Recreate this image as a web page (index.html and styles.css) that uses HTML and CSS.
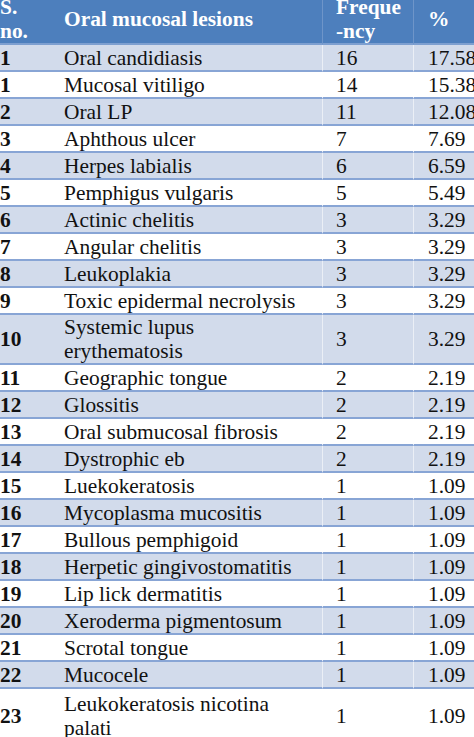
FILE: index.html
```html
<!DOCTYPE html>
<html lang="en">
<head>
<meta charset="utf-8">
<title>Oral mucosal lesions</title>
<link rel="stylesheet" href="styles.css">
</head>
<body>
<div class="frame">
<table class="lesions">
  <colgroup>
    <col class="c-no">
    <col class="c-name">
    <col class="c-freq">
    <col class="c-pct">
  </colgroup>
  <thead>
    <tr class="head">
      <th class="no">S.<br>no.</th>
      <th class="name">Oral mucosal lesions</th>
      <th class="freq">Freque<br>-ncy</th>
      <th class="pct">%</th>
    </tr>
  </thead>
  <tbody>
    <tr class="band"><td class="no">1</td><td class="name">Oral candidiasis</td><td class="freq">16</td><td class="pct">17.58</td></tr>
    <tr><td class="no">1</td><td class="name">Mucosal vitiligo</td><td class="freq">14</td><td class="pct">15.38</td></tr>
    <tr class="band"><td class="no">2</td><td class="name">Oral LP</td><td class="freq">11</td><td class="pct">12.08</td></tr>
    <tr><td class="no">3</td><td class="name">Aphthous ulcer</td><td class="freq">7</td><td class="pct">7.69</td></tr>
    <tr class="band"><td class="no">4</td><td class="name">Herpes labialis</td><td class="freq">6</td><td class="pct">6.59</td></tr>
    <tr><td class="no">5</td><td class="name">Pemphigus vulgaris</td><td class="freq">5</td><td class="pct">5.49</td></tr>
    <tr class="band"><td class="no">6</td><td class="name">Actinic chelitis</td><td class="freq">3</td><td class="pct">3.29</td></tr>
    <tr><td class="no">7</td><td class="name">Angular chelitis</td><td class="freq">3</td><td class="pct">3.29</td></tr>
    <tr class="band"><td class="no">8</td><td class="name">Leukoplakia</td><td class="freq">3</td><td class="pct">3.29</td></tr>
    <tr><td class="no">9</td><td class="name">Toxic epidermal necrolysis</td><td class="freq">3</td><td class="pct">3.29</td></tr>
    <tr class="band tall"><td class="no">10</td><td class="name">Systemic lupus<br>erythematosis</td><td class="freq">3</td><td class="pct">3.29</td></tr>
    <tr><td class="no">11</td><td class="name">Geographic tongue</td><td class="freq">2</td><td class="pct">2.19</td></tr>
    <tr class="band"><td class="no">12</td><td class="name">Glossitis</td><td class="freq">2</td><td class="pct">2.19</td></tr>
    <tr><td class="no">13</td><td class="name">Oral submucosal fibrosis</td><td class="freq">2</td><td class="pct">2.19</td></tr>
    <tr class="band"><td class="no">14</td><td class="name">Dystrophic eb</td><td class="freq">2</td><td class="pct">2.19</td></tr>
    <tr><td class="no">15</td><td class="name">Luekokeratosis</td><td class="freq">1</td><td class="pct">1.09</td></tr>
    <tr class="band"><td class="no">16</td><td class="name">Mycoplasma mucositis</td><td class="freq">1</td><td class="pct">1.09</td></tr>
    <tr><td class="no">17</td><td class="name">Bullous pemphigoid</td><td class="freq">1</td><td class="pct">1.09</td></tr>
    <tr class="band"><td class="no">18</td><td class="name">Herpetic gingivostomatitis</td><td class="freq">1</td><td class="pct">1.09</td></tr>
    <tr><td class="no">19</td><td class="name">Lip lick dermatitis</td><td class="freq">1</td><td class="pct">1.09</td></tr>
    <tr class="band"><td class="no">20</td><td class="name">Xeroderma pigmentosum</td><td class="freq">1</td><td class="pct">1.09</td></tr>
    <tr><td class="no">21</td><td class="name">Scrotal tongue</td><td class="freq">1</td><td class="pct">1.09</td></tr>
    <tr class="band"><td class="no">22</td><td class="name">Mucocele</td><td class="freq">1</td><td class="pct">1.09</td></tr>
    <tr class="tall last"><td class="no">23</td><td class="name">Leukokeratosis nicotina<br>palati</td><td class="freq">1</td><td class="pct">1.09</td></tr>
  </tbody>
</table>
</div>
</body>
</html>
```

FILE: styles.css
```css
html, body {
  margin: 0;
  padding: 0;
  background: #ffffff;
}

.frame {
  width: 474px;
  height: 737px;
  overflow: hidden;
}

.lesions {
  margin-top: -5px;
  width: 500px;
  table-layout: fixed;
  border-collapse: separate;
  border-spacing: 0;
  font-family: "Liberation Serif", "Times New Roman", serif;
  font-size: 21.4px;
  line-height: 24px;
  color: #111111;
}

.c-no { width: 58px; }
.c-name { width: 264px; }
.c-freq { width: 91px; }
.c-pct { width: 87px; }

.lesions th,
.lesions td {
  padding: 0;
  text-align: left;
  vertical-align: middle;
  white-space: nowrap;
  border-bottom: 2px solid #88a5d5;
}

.lesions td.no,
.lesions th.no { padding-left: 0; font-weight: bold; }
.lesions .name { padding-left: 6px; }
.lesions .freq { padding-left: 13px; }
.lesions .pct { padding-left: 14px; }

.head {
  height: 49px;
  background: #4d7fbd;
}

.head th {
  color: #ffffff;
  font-weight: bold;
  border-bottom: 2px solid #7d9fd0;
}

.head th.freq,
.head th.pct {
  border-left: 1px solid #6e95c9;
}

.lesions tbody tr {
  height: 27px;
}

.lesions tbody tr.tall {
  height: 49px;
}

.lesions tbody tr.last {
  height: 54px;
}

.lesions tbody tr.last td {
  border-bottom: none;
}

.band {
  background: #d2dbeb;
}

.lesions td.freq,
.lesions td.pct {
  border-left: 1px solid transparent;
}

.band td.freq,
.band td.pct {
  border-left-color: rgba(255, 255, 255, 0.55);
}
```
